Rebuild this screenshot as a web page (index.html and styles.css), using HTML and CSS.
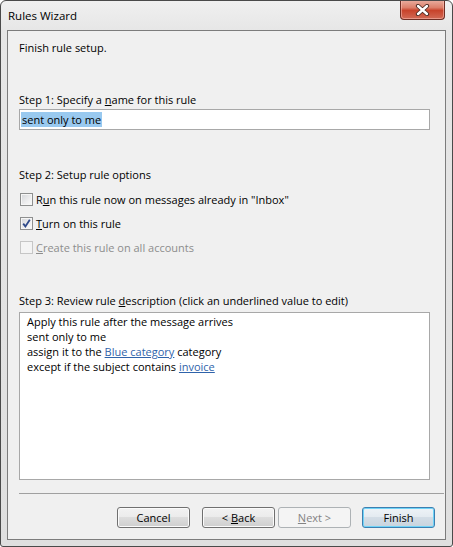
FILE: index.html
```html
<!DOCTYPE html>
<html>
<head>
<meta charset="utf-8">
<link rel="stylesheet" href="styles.css">
</head>
<body>
<div class="window">
  <div class="titlebar">
    <span class="title">Rules Wizard</span>
    <div class="close">
      <svg width="17" height="12" viewBox="0 0 17 12">
        <path d="M4 2 L13 10 M13 2 L4 10" stroke="#4a2a22" stroke-width="4.2" stroke-linecap="round" fill="none"/>
        <path d="M4 2 L13 10 M13 2 L4 10" stroke="#ffffff" stroke-width="2.4" stroke-linecap="round" fill="none"/>
      </svg>
    </div>
  </div>
  <div class="client">
    <div class="line intro">Finish rule setup.</div>
    <div class="line step1">Step 1: Specify a <u>n</u>ame for this rule</div>
    <div class="textbox"><span class="sel">sent only to me</span></div>
    <div class="line step2">Step 2: Setup rule options</div>
    <div class="opt first"><span class="cb"></span><span>R<u>u</u>n this rule now on messages already in "Inbox"</span></div>
    <div class="opt"><span class="cb checked"><svg width="11" height="11" viewBox="0 0 11 11"><path d="M2.2 5.6 L4.4 8.4 L8.8 1.8" stroke="#2f4a8a" stroke-width="1.8" fill="none"/></svg></span><span><u>T</u>urn on this rule</span></div>
    <div class="opt disabled"><span class="cb"></span><span><u>C</u>reate this rule on all accounts</span></div>
    <div class="line step3">Step 3: Review rule <u>d</u>escription (click an underlined value to edit)</div>
    <div class="desc">
      <div>Apply this rule after the message arrives</div>
      <div>sent only to me</div>
      <div>assign it to the <a class="link">Blue category</a> category</div>
      <div>except if the subject contains <a class="link">invoice</a></div>
    </div>
    <div class="sep"></div>
    <div class="buttons">
      <div class="btn"><span>Cancel</span></div>
      <div class="btn back"><span>&lt; <u>B</u>ack</span></div>
      <div class="btn next disabled"><span><u>N</u>ext &gt;</span></div>
      <div class="btn finish"><span>Finish</span></div>
    </div>
  </div>
</div>
</body>
</html>
```

FILE: styles.css
```css
* { box-sizing: border-box; }
html, body {
  margin: 0;
  padding: 0;
  background: #ffffff;
}
body {
  font-family: "Segoe UI", "Open Sans", "Noto Sans", sans-serif;
  font-size: 11px;
  color: #000;
}
.window {
  width: 453px;
  height: 547px;
  border: 1px solid #4a4a4a;
  border-radius: 6px 6px 3px 3px;
  background: linear-gradient(to bottom, #f0f0f0 0px, #e6e6e6 30px, #dfdfdf 100%);
  display: flex;
  flex-direction: column;
  overflow: hidden;
}
.titlebar {
  height: 29px;
  display: flex;
  justify-content: space-between;
  align-items: flex-start;
  padding-right: 7px;
  flex: none;
}
.title {
  padding-top: 7px;
  padding-left: 7px;
  line-height: 15px;
  font-size: 11.5px;
}
.close {
  margin-top: -1px;
  width: 45px;
  height: 20px;
  border: 1px solid #6e2e24;
  border-top: none;
  border-radius: 0 0 4px 4px;
  background: linear-gradient(to bottom, #eab0a2 0%, #dc7f6a 40%, #c8432b 55%, #d26a55 100%);
  box-shadow: inset 0 0 0 1px rgba(255,200,190,0.5);
  display: flex;
  align-items: center;
  justify-content: center;
}
.close svg { display: block; }
.client {
  margin: 0 6px;
  height: 510px;
  border: 1px solid #7c7c7c;
  background: #f0f0f0;
  padding: 9px 0 0 11px;
  flex: none;
}
.line {
  line-height: 15px;
  white-space: nowrap;
}
.step1 { margin-top: 37px; }
.step2 { margin-top: 37px; }
.step3 { margin-top: 38px; }
.textbox {
  margin-top: 2px;
  width: 411px;
  height: 21px;
  border: 1px solid #a8a8a8;
  background: #fff;
  padding: 2px 0 0 1px;
}
.sel {
  display: inline-block;
  background: #99c9ef;
  line-height: 15px;
  padding: 0 1px;
}
.opt {
  display: flex;
  align-items: center;
  height: 15px;
  line-height: 15px;
  margin-top: 9px;
  white-space: nowrap;
}
.opt.first { margin-top: 10px; }
.cb {
  width: 13px;
  height: 13px;
  margin-left: 1px;
  margin-right: 3px;
  border: 1px solid #8e8f8f;
  background: linear-gradient(135deg, #d4d6d9 0%, #eeeeef 60%, #fbfbfb 100%);
  box-shadow: inset 0 0 0 1px #f6f6f6;
  flex: none;
  display: flex;
  align-items: center;
  justify-content: center;
}
.cb svg { display: block; }
.opt.disabled { color: #8d8d8d; }
.opt.disabled .cb {
  border-color: #c6c6c6;
  background: #f4f4f4;
  box-shadow: none;
}
.desc {
  margin-top: 4px;
  width: 411px;
  height: 168px;
  border: 1px solid #a8a8a8;
  background: #fff;
  padding: 1px 0 0 7px;
  line-height: 15px;
  white-space: nowrap;
}
.link {
  color: #2f63aa;
  text-decoration: underline;
}
.sep {
  margin-top: 13px;
  width: 425px;
  height: 1px;
  background: #a0a0a0;
}
.buttons {
  margin-top: 13px;
  margin-left: -11px;
  display: flex;
  justify-content: flex-end;
  padding-right: 10px;
}
.btn {
  width: 73px;
  height: 21px;
  border: 1px solid #707070;
  border-radius: 3px;
  background: linear-gradient(to bottom, #f2f2f2 0%, #ebebeb 50%, #dddddd 50%, #cfcfcf 100%);
  box-shadow: inset 0 0 0 1px #fbfbfb;
  display: flex;
  align-items: center;
  justify-content: center;
  line-height: 15px;
  white-space: nowrap;
}
.btn.back { margin-left: 12px; }
.btn.next { margin-left: 3px; }
.btn.finish { margin-left: 11px; }
.btn.disabled {
  border-color: #adb2b5;
  background: #f4f4f4;
  box-shadow: none;
  color: #838383;
}
.btn.finish {
  border-color: #3c7fb1;
  background: linear-gradient(to bottom, #eef3f7 0%, #e3eaf0 50%, #d3dde6 50%, #c8d4de 100%);
  box-shadow: inset 0 0 0 1px #6fd3f7;
}
```
